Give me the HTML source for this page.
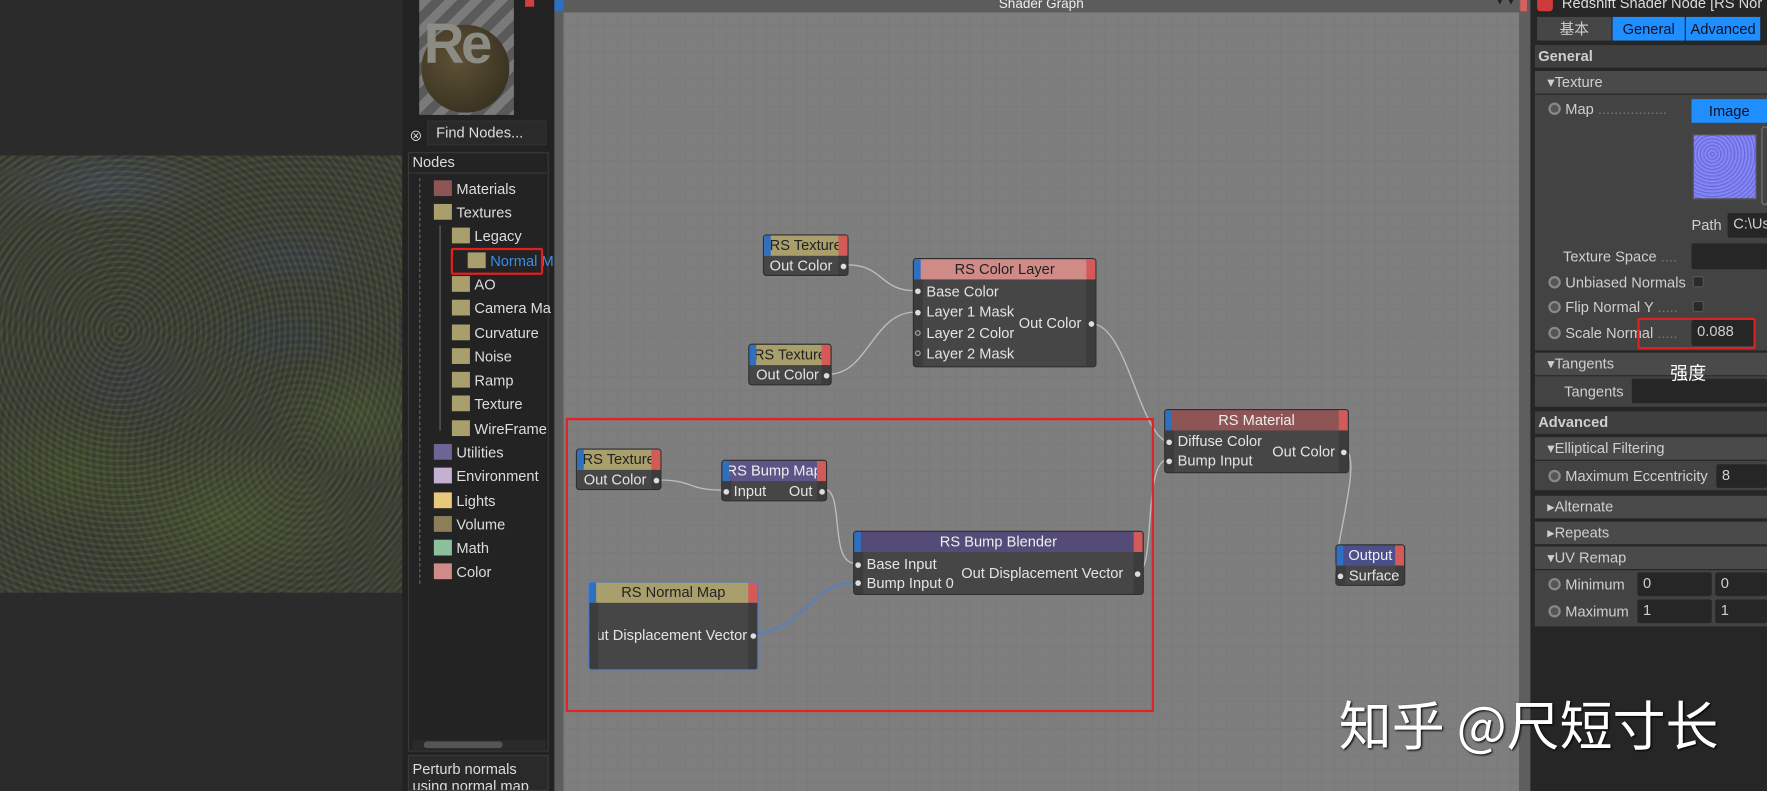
<!DOCTYPE html>
<html><head><meta charset="utf-8"><style>
*{margin:0;padding:0;box-sizing:border-box}
html,body{width:1767px;height:791px;overflow:hidden;background:#2b2b2b}
#s{position:absolute;left:0;top:0;width:1568px;height:702px;transform:scale(1.12691,1.12678);transform-origin:0 0;font-family:"Liberation Sans","Noto Sans CJK SC",sans-serif;color:#ddd;font-size:13px}
.a{position:absolute}
.node{position:absolute;background:#464646;border:1px solid #2e2e2e;border-radius:3px;overflow:hidden}
.node .h{position:absolute;left:0;right:0;top:0;height:18px;text-align:center;line-height:18px;font-size:13px;color:#222;white-space:nowrap;overflow:hidden}
.node .bl{position:absolute;left:0;top:0;width:6px;height:18px;background:#2f6fc0}
.node .rd{position:absolute;right:0;top:0;width:8px;height:18px;background:#d45a5a}
.node .ls{position:absolute;left:0;top:18px;bottom:0;width:8px;background:#3c3c3c}
.node .rs{position:absolute;right:0;top:18px;bottom:0;width:8px;background:#3c3c3c}
.node .t{position:absolute;font-size:13px;color:#e4e4e4;white-space:nowrap}
.dot{position:absolute;width:5px;height:5px;border-radius:50%;background:#ddd}
.tr{position:absolute;left:0;font-size:13px;color:#ddd;white-space:nowrap}
.tr i{display:inline-block;width:16px;height:14px;vertical-align:-2px;margin-right:4px}
.rp{position:absolute;left:1362px;width:206px;background:#434343}
.rt{position:absolute;font-size:13px;color:#cfcfcf;white-space:nowrap}
.rad{display:inline-block;width:11px;height:11px;border-radius:50%;border:2px solid #888;background:#555;vertical-align:-1px;margin-right:4px}
.fld{position:absolute;background:#262626;border-radius:2px;color:#cfcfcf;font-size:13px;padding-left:5px;line-height:20px}
</style></head><body><div id="s">
<!-- left viewport image -->
<div class="a" style="left:0;top:138px;width:357px;height:388px;background:
repeating-radial-gradient(circle at 30% 40%,rgba(100,120,60,.18) 0 2px,rgba(30,30,40,.15) 2px 5px),
repeating-radial-gradient(circle at 75% 70%,rgba(90,110,55,.15) 0 3px,rgba(35,35,45,.15) 3px 6px),
radial-gradient(ellipse 130px 45px at 90px 25px,#474a58 0,transparent 80%),
radial-gradient(ellipse 100px 40px at 260px 90px,#3d404c 0,transparent 80%),
radial-gradient(ellipse 90px 50px at 120px 200px,#3b3d45 0,transparent 80%),
radial-gradient(ellipse 150px 90px at 200px 320px,#4b5632 0,transparent 80%),
radial-gradient(ellipse 120px 70px at 60px 280px,#46502f 0,transparent 80%),
radial-gradient(ellipse 100px 70px at 320px 230px,#485234 0,transparent 80%),
radial-gradient(ellipse 80px 40px at 250px 160px,#3a3e46 0,transparent 80%),
#3b3f36"></div>
<!-- node panel -->
<div class="a" style="left:357px;top:0;width:135px;height:702px;background:#222"></div>
<div class="a" style="left:372px;top:0;width:84px;height:102px;background:repeating-linear-gradient(135deg,#7a7a7a 0 8px,#5a5a5a 8px 16px)"></div>
<div class="a" style="left:374px;top:22px;width:78px;height:78px;border-radius:50%;background:radial-gradient(circle at 40% 40%,#5e5236,#2e281a)"></div>
<div class="a" style="left:376px;top:10px;font-size:50px;font-weight:bold;color:#8c8c84;letter-spacing:-3px">Re</div>
<div class="a" style="left:466px;top:0;width:8px;height:6px;background:#d04040"></div>
<div class="a" style="left:363px;top:112px;font-size:12px;color:#ddd">⊗</div>
<div class="a" style="left:379px;top:107px;width:106px;height:22px;background:#2a2a2a;border:1px solid #333;font-size:13px;color:#ddd;padding-left:7px;line-height:20px">Find Nodes...</div>
<div class="a" style="left:362px;top:135px;width:125px;height:532px;border:1px solid #3a3a3a;background:#232323"></div>
<div class="a" style="left:366px;top:136px;font-size:13px;color:#ddd">Nodes</div>
<div class="a" style="left:363px;top:153px;width:122px;height:1px;background:#3a3a3a"></div>
<div class="a" style="left:372px;top:158px;width:1px;height:360px;border-left:1px dashed #666"></div>
<div class="a" style="left:390px;top:200px;width:1px;height:182px;background:#666"></div>
<div class="a" style="left:385px;top:0;width:100px">
<div class="tr" style="top:160px"><i style="background:#8e5555"></i>Materials</div>
<div class="tr" style="top:181px"><i style="background:#a99f6c"></i>Textures</div>
<div class="tr" style="top:202px;left:16px"><i style="background:#a99f6c"></i>Legacy</div>
<div class="tr" style="top:224px;left:30px;color:#3a8ee6"><i style="background:#a99f6c"></i>Normal M</div>
<div class="tr" style="top:245px;left:16px"><i style="background:#a99f6c"></i>AO</div>
<div class="tr" style="top:266px;left:16px"><i style="background:#a99f6c"></i>Camera Ma</div>
<div class="tr" style="top:288px;left:16px"><i style="background:#a99f6c"></i>Curvature</div>
<div class="tr" style="top:309px;left:16px"><i style="background:#a99f6c"></i>Noise</div>
<div class="tr" style="top:330px;left:16px"><i style="background:#a99f6c"></i>Ramp</div>
<div class="tr" style="top:351px;left:16px"><i style="background:#a99f6c"></i>Texture</div>
<div class="tr" style="top:373px;left:16px"><i style="background:#a99f6c"></i>WireFrame</div>
<div class="tr" style="top:394px"><i style="background:#6e6594"></i>Utilities</div>
<div class="tr" style="top:415px"><i style="background:#c4b0d0"></i>Environment</div>
<div class="tr" style="top:437px"><i style="background:#e8c87a"></i>Lights</div>
<div class="tr" style="top:458px"><i style="background:#8a7f58"></i>Volume</div>
<div class="tr" style="top:479px"><i style="background:#8cbf9c"></i>Math</div>
<div class="tr" style="top:500px"><i style="background:#d08a88"></i>Color</div>
</div>
<div class="a" style="left:400px;top:220px;width:82px;height:24px;border:2px solid #e02020;border-radius:2px"></div>
<div class="a" style="left:366px;top:657px;width:118px;height:8px;background:#2a2a2a"></div>
<div class="a" style="left:376px;top:658px;width:70px;height:6px;border-radius:3px;background:#555"></div>
<div class="a" style="left:362px;top:670px;width:125px;height:32px;background:#2a2a2a;border:1px solid #3a3a3a;font-size:13px;color:#ddd;padding:4px 0 0 3px;line-height:15px;overflow:hidden">Perturb normals using normal map</div>
<!-- graph -->
<div class="a" style="left:492px;top:0;width:866px;height:702px;background:#7e7e7e"></div>
<div class="a" style="left:500px;top:10px;width:848px;height:692px;background-image:linear-gradient(#777 1px,transparent 1px),linear-gradient(90deg,#777 1px,transparent 1px);background-size:12px 12px;opacity:.5"></div>
<div class="a" style="left:492px;top:0;width:8px;height:702px;background:#5e5e5e"></div>
<div class="a" style="left:492px;top:0;width:8px;height:10px;background:#2f6fc0"></div>
<div class="a" style="left:1348px;top:0;width:10px;height:702px;background:#5e5e5e"></div>
<div class="a" style="left:500px;top:0;width:848px;height:11px;background:#5c5c5c;text-align:center;font-size:12px;line-height:6px;color:#eee;overflow:hidden">Shader Graph</div>
<div class="a" style="left:1326px;top:-4px;font-size:10px;color:#222">▼▼</div>
<div class="a" style="left:1349px;top:0;width:6px;height:10px;background:#d46060"></div>
<svg class="a" style="left:0;top:0" width="1568" height="702" fill="none" stroke="#bdbdbd" stroke-width="1.2">
<path d="M751 235 C785 235,780 258,812 258"/>
<path d="M736 332 C770 332,775 277,812 277"/>
<path d="M969 287 C1000 290,1010 380,1035 392"/>
<path d="M585 426 C615 426,610 435,642 435"/>
<path d="M731 434 C750 434,735 500,759 500"/>
<path d="M1011 508 C1025 500,1015 412,1035 408"/>
<path d="M1194 400 C1210 405,1180 500,1186 510"/>
<path d="M670 563 C720 555,715 520,759 516" stroke="#5b7fb8" stroke-width="2"/>
</svg>
<!-- nodes -->
<div class="node" style="left:677px;top:208px;width:76px;height:37px"><div class="h" style="background:#a99f6c">RS Texture</div><div class="bl"></div><div class="rd"></div><div class="rs"></div><div class="t" style="left:5px;top:19px">Out Color</div><div class="dot" style="left:68px;top:25px"></div></div>
<div class="node" style="left:664px;top:305px;width:74px;height:37px"><div class="h" style="background:#a99f6c">RS Texture</div><div class="bl"></div><div class="rd"></div><div class="rs"></div><div class="t" style="left:6px;top:19px">Out Color</div><div class="dot" style="left:66px;top:25px"></div></div>
<div class="node" style="left:810px;top:229px;width:163px;height:97px"><div class="h" style="background:#d08a88">RS Color Layer</div><div class="bl"></div><div class="rd"></div><div class="ls"></div><div class="rs"></div>
<div class="t" style="left:11px;top:21px">Base Color</div><div class="t" style="left:11px;top:39px">Layer 1 Mask</div><div class="t" style="left:11px;top:58px">Layer 2 Color</div><div class="t" style="left:11px;top:76px">Layer 2 Mask</div><div class="t" style="left:93px;top:49px">Out Color</div>
<div class="dot" style="left:1px;top:26px"></div><div class="dot" style="left:1px;top:45px"></div><div class="dot" style="left:1px;top:63px;background:none;border:1px solid #aaa"></div><div class="dot" style="left:1px;top:81px;background:none;border:1px solid #aaa"></div><div class="dot" style="left:155px;top:55px"></div></div>
<div class="node" style="left:511px;top:398px;width:76px;height:37px"><div class="h" style="background:#a99f6c">RS Texture</div><div class="bl"></div><div class="rd"></div><div class="rs"></div><div class="t" style="left:6px;top:19px">Out Color</div><div class="dot" style="left:68px;top:25px"></div></div>
<div class="node" style="left:640px;top:408px;width:94px;height:37px"><div class="h" style="background:#5d5588;color:#eee">RS Bump Map</div><div class="bl"></div><div class="rd"></div><div class="ls"></div><div class="rs"></div><div class="t" style="left:10px;top:19px">Input</div><div class="t" style="left:59px;top:19px">Out</div><div class="dot" style="left:1px;top:25px"></div><div class="dot" style="left:86px;top:25px"></div></div>
<div class="node" style="left:757px;top:471px;width:258px;height:57px"><div class="h" style="background:#544b78;color:#eee">RS Bump Blender</div><div class="bl"></div><div class="rd"></div><div class="ls"></div><div class="rs"></div>
<div class="t" style="left:11px;top:21px">Base Input</div><div class="t" style="left:11px;top:38px">Bump Input 0</div><div class="t" style="left:95px;top:29px">Out Displacement Vector</div><div class="dot" style="left:1px;top:27px"></div><div class="dot" style="left:1px;top:43px"></div><div class="dot" style="left:249px;top:35px"></div></div>
<div class="node" style="left:522px;top:516px;width:151px;height:79px;border:1px solid #4a7fd0"><div class="h" style="background:#a99f6c">RS Normal Map</div><div class="bl"></div><div class="rd"></div><div class="ls"></div><div class="rs"></div><div class="t" style="left:8px;top:39px;width:132px;overflow:hidden;direction:rtl">Out Displacement Vector</div><div class="dot" style="left:143px;top:45px"></div></div>
<div class="node" style="left:1033px;top:363px;width:164px;height:57px"><div class="h" style="background:#8e5554;color:#eee">RS Material</div><div class="bl"></div><div class="rd"></div><div class="ls"></div><div class="rs"></div>
<div class="t" style="left:11px;top:20px">Diffuse Color</div><div class="t" style="left:11px;top:37px">Bump Input</div><div class="t" style="left:95px;top:29px">Out Color</div><div class="dot" style="left:1px;top:26px"></div><div class="dot" style="left:1px;top:43px"></div><div class="dot" style="left:156px;top:35px"></div></div>
<div class="node" style="left:1185px;top:483px;width:62px;height:37px"><div class="h" style="background:#4b4f8a;color:#eee">Output</div><div class="bl"></div><div class="rd"></div><div class="ls"></div><div class="rs"></div><div class="t" style="left:11px;top:19px">Surface</div><div class="dot" style="left:1px;top:25px"></div></div>
<div class="a" style="left:502px;top:371px;width:522px;height:261px;border:2px solid #e02424"></div>
<!-- right panel -->
<div class="a" style="left:1358px;top:0;width:210px;height:702px;background:#262626"></div>
<div class="a" style="left:1364px;top:-2px;width:14px;height:12px;background:#d03a3a;border-radius:3px"></div>
<div class="rt" style="left:1386px;top:-5px;color:#ddd">Redshift Shader Node [RS Nor</div>
<div class="a" style="left:1364px;top:15px;width:66px;height:21px;background:#464646;text-align:center;font-size:13px;line-height:21px;color:#ccc">基本</div>
<div class="a" style="left:1431px;top:15px;width:64px;height:21px;background:#1f8fff;text-align:center;font-size:13px;line-height:21px;color:#112">General</div>
<div class="a" style="left:1496px;top:15px;width:66px;height:21px;background:#1f8fff;text-align:center;font-size:13px;line-height:21px;color:#112">Advanced</div>
<div class="rp" style="top:40px;height:20px;background:#3f3f3f"></div><div class="rt" style="left:1365px;top:42px;font-weight:bold;color:#cfcfcf">General</div>
<div class="rp" style="top:63px;height:20px;background:#4a4a4a"></div><div class="rt" style="left:1373px;top:65px">▾Texture</div>
<div class="rp" style="top:84px;height:227px"></div>
<div class="rt" style="left:1374px;top:89px"><span class="rad"></span>Map <span style="color:#777">.................</span></div>
<div class="a" style="left:1501px;top:88px;width:67px;height:21px;background:#1f8fff;font-size:13px;color:#112;text-align:center;line-height:21px">Image</div>
<div class="a" style="left:1502px;top:119px;width:57px;height:58px;background:repeating-radial-gradient(circle at 30% 30%,#8a8cf0 0 1px,#6a6ae0 1px 2px,#7c7ef2 2px 3px);border:1px solid #555"></div>
<div class="a" style="left:1563px;top:112px;width:6px;height:70px;border:1px solid #777;border-radius:3px"></div>
<div class="rt" style="left:1501px;top:192px">Path</div>
<div class="fld" style="left:1533px;top:189px;width:40px;height:22px">C:\Us</div>
<div class="rt" style="left:1387px;top:220px">Texture Space <span style="color:#777">....</span></div>
<div class="fld" style="left:1501px;top:216px;width:70px;height:23px"></div>
<div class="rt" style="left:1374px;top:243px"><span class="rad"></span>Unbiased Normals</div>
<div class="a" style="left:1502px;top:245px;width:10px;height:10px;background:#2a2a2a;border:1px solid #555;border-radius:2px"></div>
<div class="rt" style="left:1374px;top:265px"><span class="rad"></span>Flip Normal Y <span style="color:#777">.....</span></div>
<div class="a" style="left:1502px;top:267px;width:10px;height:10px;background:#2a2a2a;border:1px solid #555;border-radius:2px"></div>
<div class="rt" style="left:1374px;top:288px"><span class="rad"></span>Scale Normal <span style="color:#777">.....</span></div>
<div class="fld" style="left:1501px;top:284px;width:56px;height:23px">0.088</div>
<div class="a" style="left:1453px;top:282px;width:105px;height:28px;border:2px solid #e02020;border-radius:2px"></div>
<div class="rp" style="top:313px;height:20px;background:#4a4a4a"></div><div class="rt" style="left:1373px;top:315px">▾Tangents</div>
<div class="rp" style="top:334px;height:27px"></div><div class="rt" style="left:1388px;top:340px">Tangents</div>
<div class="fld" style="left:1448px;top:336px;width:120px;height:22px"></div>
<div class="a" style="left:1482px;top:318px;font-size:16px;color:#fff">强度</div>
<div class="rp" style="top:365px;height:20px;background:#3f3f3f"></div><div class="rt" style="left:1365px;top:367px;font-weight:bold">Advanced</div>
<div class="rp" style="top:388px;height:20px;background:#4a4a4a"></div><div class="rt" style="left:1373px;top:390px">▾Elliptical Filtering</div>
<div class="rp" style="top:409px;height:26px"></div><div class="rt" style="left:1374px;top:415px"><span class="rad"></span>Maximum Eccentricity</div>
<div class="fld" style="left:1523px;top:412px;width:45px;height:21px">8</div>
<div class="rp" style="top:440px;height:20px;background:#4a4a4a"></div><div class="rt" style="left:1373px;top:442px">▸Alternate</div>
<div class="rp" style="top:463px;height:20px;background:#4a4a4a"></div><div class="rt" style="left:1373px;top:465px">▸Repeats</div>
<div class="rp" style="top:485px;height:20px;background:#4a4a4a"></div><div class="rt" style="left:1373px;top:487px">▾UV Remap</div>
<div class="rp" style="top:506px;height:50px"></div>
<div class="rt" style="left:1374px;top:511px"><span class="rad"></span>Minimum</div>
<div class="fld" style="left:1453px;top:508px;width:66px;height:21px">0</div><div class="fld" style="left:1522px;top:508px;width:46px;height:21px">0</div>
<div class="rt" style="left:1374px;top:535px"><span class="rad"></span>Maximum</div>
<div class="fld" style="left:1453px;top:532px;width:66px;height:21px">1</div><div class="fld" style="left:1522px;top:532px;width:46px;height:21px">1</div>
<!-- watermark -->
<div class="a" style="left:1188px;top:606px;font-size:47px;color:#fff;white-space:nowrap;text-shadow:1px 1px 2px #000;font-family:'Noto Sans CJK SC','Liberation Sans',sans-serif">知乎 @尺短寸长</div>
</div></body></html>
